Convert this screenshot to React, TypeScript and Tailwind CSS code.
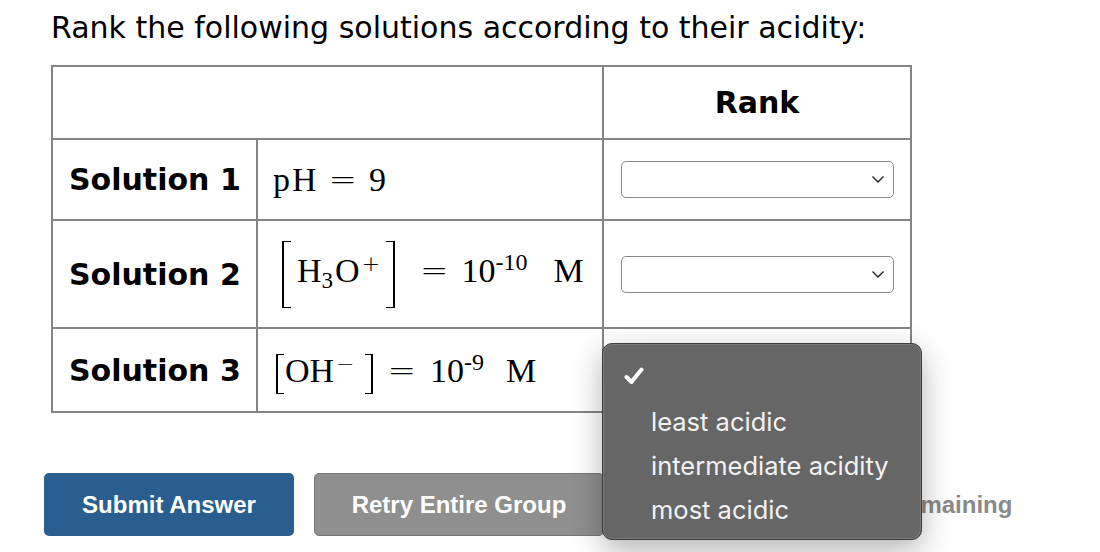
import React from "react";

const verdana = { fontFamily: '"DejaVu Sans", Verdana, sans-serif' };

function Bracket({ side, h }: { side: "l" | "r"; h: string }) {
  // square bracket drawn with borders
  return (
    <span
      className={`inline-block align-middle ${h} border-black border-t-[1.5px] border-b-[1.5px] ${
        side === "l" ? "border-l-2" : "border-r-2"
      }`}
    />
  );
}

function SelectBox() {
  return (
    <div className="flex h-[37px] w-[273px] items-center justify-end rounded-[5px] border border-[#8a8a8a] bg-white pr-[8px]">
      <svg width="14" height="9" viewBox="0 0 14 9" fill="none">
        <path d="M1.5 1.5 L7 7 L12.5 1.5" stroke="#222" strokeWidth="1.4" />
      </svg>
    </div>
  );
}

const sym = "font-['DejaVu_Sans',sans-serif] font-light";

export default function App() {
  const cell = "border-2 border-[#858585]";
  const label = "text-[30px] font-bold text-black pl-[16px] pr-[14px] whitespace-nowrap";
  const math = "font-['Liberation_Serif',serif] text-[34px] text-black whitespace-nowrap";

  return (
    <div className="relative h-[552px] w-[1100px] overflow-hidden bg-white">
      <div className="pl-[51px] pt-[9px]">
        <h1 className="text-[30px] leading-[38px] text-black" style={verdana}>
          Rank the following solutions according to their acidity:
        </h1>

        <table className="mt-[18px] border-collapse" style={verdana}>
          <tbody>
            <tr className="h-[73px]">
              <td colSpan={2} className={`${cell} w-[551px]`} />
              <td className={`${cell} w-[308px] text-center text-[30px] font-bold`}>Rank</td>
            </tr>
            <tr className="h-[81px]">
              <td className={`${cell} ${label} w-[205px]`}>Solution 1</td>
              <td className={`${cell} ${math} w-[346px] pl-[15px]`}>
                <span className="tracking-[2px]">pH</span>
                <span className={`${sym} ml-[10px]`}>=</span>
                <span className="ml-[12px]">9</span>
              </td>
              <td className={`${cell} pl-[17px]`}>
                <SelectBox />
              </td>
            </tr>
            <tr className="h-[108px]">
              <td className={`${cell} ${label}`}>Solution 2</td>
              <td className={`${cell} ${math} pl-[24px]`}>
                <Bracket side="l" h="h-[67px] w-[9px]" />
                <span className="ml-[6px]">H</span>
                <sub className="text-[23px]">3</sub>
                <span className="ml-[2px]">O</span>
                <sup className={`${sym} ml-[2px] text-[22px]`}>+</sup>
                <span className="ml-[6px]" />
                <Bracket side="r" h="h-[67px] w-[9px]" />
                <span className={`${sym} ml-[25px]`}>=</span>
                <span className="ml-[13px]">10</span>
                <sup className="text-[24px]">-10</sup>
                <span className="ml-[26px]">M</span>
              </td>
              <td className={`${cell} pl-[17px]`}>
                <SelectBox />
              </td>
            </tr>
            <tr className="h-[84px]">
              <td className={`${cell} ${label}`}>Solution 3</td>
              <td className={`${cell} ${math} pl-[18px]`}>
                <Bracket side="l" h="h-[40px] w-[8px]" />
                <span className="ml-[1px]">OH</span>
                <sup className={`${sym} ml-[2px] text-[22px]`}>−</sup>
                <span className="ml-[10px]" />
                <Bracket side="r" h="h-[40px] w-[8px]" />
                <span className={`${sym} ml-[15px]`}>=</span>
                <span className="ml-[14px]">10</span>
                <sup className="text-[24px]">-9</sup>
                <span className="ml-[22px]">M</span>
              </td>
              <td className={cell} />
            </tr>
          </tbody>
        </table>
      </div>

      <div className="mt-[60px] flex items-center pl-[44px] font-['Liberation_Sans',Arial,sans-serif]">
        <button className="h-[63px] w-[250px] rounded-[5px] bg-[#2b5e90] text-[24px] font-bold text-white">
          Submit Answer
        </button>
        <button className="ml-[20px] h-[63px] w-[290px] rounded-[5px] border border-[#777] bg-[#8f8f8f] text-[24px] font-bold text-white">
          Retry Entire Group
        </button>
        <span className="ml-[27px] text-[24px] font-bold text-[#8a8a8a]">
          9 more group attempts remaining
        </span>
      </div>

      {/* open select menu */}
      <div className="absolute left-[602px] top-[343px] z-10 h-[197px] w-[320px] rounded-[10px] border border-[#3c3c3c] bg-[#666] pt-[18px] font-['Inter','Liberation_Sans',sans-serif] text-[25.5px] text-[#f2f2f2] shadow-[0_0_1px_1px_rgba(255,255,255,0.15)_inset,0_10px_30px_rgba(0,0,0,0.3)]">
        <div className="flex h-[28px] items-center pl-[21px]">
          <svg width="20" height="18" viewBox="0 0 20 18">
            <path d="M2.5 10 L7.5 15 L17.5 2.5" stroke="#fff" strokeWidth="4" fill="none" strokeLinecap="round" strokeLinejoin="round" />
          </svg>
        </div>
        <div className="mt-[10px] flex flex-col pl-[48px]">
          <div className="h-[44px] leading-[44px]">least acidic</div>
          <div className="h-[44px] leading-[44px]">intermediate acidity</div>
          <div className="h-[44px] leading-[44px]">most acidic</div>
        </div>
      </div>
    </div>
  );
}
